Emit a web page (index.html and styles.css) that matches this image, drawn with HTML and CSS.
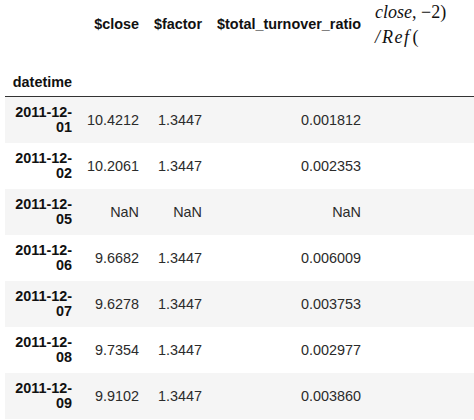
FILE: index.html
```html
<!DOCTYPE html>
<html>
<head>
<meta charset="utf-8">
<link rel="stylesheet" href="styles.css">
</head>
<body>
<div class="output">
<table class="dataframe">
  <colgroup>
    <col class="c-idx"><col class="c-close"><col class="c-factor"><col class="c-turn"><col class="c-last">
  </colgroup>
  <thead>
    <tr class="h1">
      <th></th>
      <th>$close</th>
      <th>$factor</th>
      <th>$total_turnover_ratio</th>
      <th class="latex-cell">
        <div class="latex">
          <span class="ml"><i>close</i>, −2)</span>
          <span class="ml"><i class="slash">/</i><i class="ref">Ref</i>(</span>
        </div>
      </th>
    </tr>
    <tr class="h2">
      <th>datetime</th>
      <th></th>
      <th></th>
      <th></th>
      <th></th>
    </tr>
  </thead>
  <tbody>
    <tr><th>2011-12-<br>01</th><td>10.4212</td><td>1.3447</td><td>0.001812</td><td></td></tr>
    <tr><th>2011-12-<br>02</th><td>10.2061</td><td>1.3447</td><td>0.002353</td><td></td></tr>
    <tr><th>2011-12-<br>05</th><td>NaN</td><td>NaN</td><td>NaN</td><td></td></tr>
    <tr><th>2011-12-<br>06</th><td>9.6682</td><td>1.3447</td><td>0.006009</td><td></td></tr>
    <tr><th>2011-12-<br>07</th><td>9.6278</td><td>1.3447</td><td>0.003753</td><td></td></tr>
    <tr><th>2011-12-<br>08</th><td>9.7354</td><td>1.3447</td><td>0.002977</td><td></td></tr>
    <tr><th>2011-12-<br>09</th><td>9.9102</td><td>1.3447</td><td>0.003860</td><td></td></tr>
  </tbody>
</table>
</div>
</body>
</html>
```
FILE: styles.css
```css
html, body {
  margin: 0;
  padding: 0;
  overflow: hidden;
  background: #ffffff;
}

.output {
  padding-left: 5px;
}

.dataframe {
  border-collapse: separate;
  border-spacing: 0;
  table-layout: fixed;
  width: 469px;
  font-family: "Liberation Sans", Arial, sans-serif;
  font-size: 14.4px;
  line-height: 15px;
  color: #2b2b2b;
}

.c-idx { width: 74px; }
.c-close { width: 67px; }
.c-factor { width: 63px; }
.c-turn { width: 159px; }
.c-last { width: 106px; }

.dataframe th,
.dataframe td {
  padding: 8px 7px;
  text-align: right;
  white-space: nowrap;
}

.dataframe th {
  font-weight: bold;
  color: #111;
}

.h1 th {
  height: 48px;
  box-sizing: border-box;
  padding-top: 0;
  padding-bottom: 0;
  vertical-align: middle;
}

.h2 th {
  height: 49px;
  box-sizing: border-box;
  padding-top: 0;
  padding-bottom: 6px;
  vertical-align: bottom;
  border-bottom: 1px solid #333;
}

.latex-cell {
  text-align: left !important;
}

.latex {
  height: 48px;
  font-family: "Liberation Serif", "Times New Roman", serif;
  font-weight: normal;
  font-size: 18px;
  line-height: 25px;
  color: #111;
  overflow: visible;
}

.latex .ml {
  display: block;
  height: 25px;
}

.latex i {
  font-style: italic;
}

.latex .slash {
  margin-right: 2px;
}

.latex .ref {
  letter-spacing: 1.5px;
  margin-right: 2px;
}

.dataframe tbody th,
.dataframe tbody td {
  height: 46px;
  box-sizing: border-box;
  vertical-align: middle;
}

.dataframe tbody tr:nth-child(odd) th,
.dataframe tbody tr:nth-child(odd) td {
  background: #f5f5f5;
}
```
